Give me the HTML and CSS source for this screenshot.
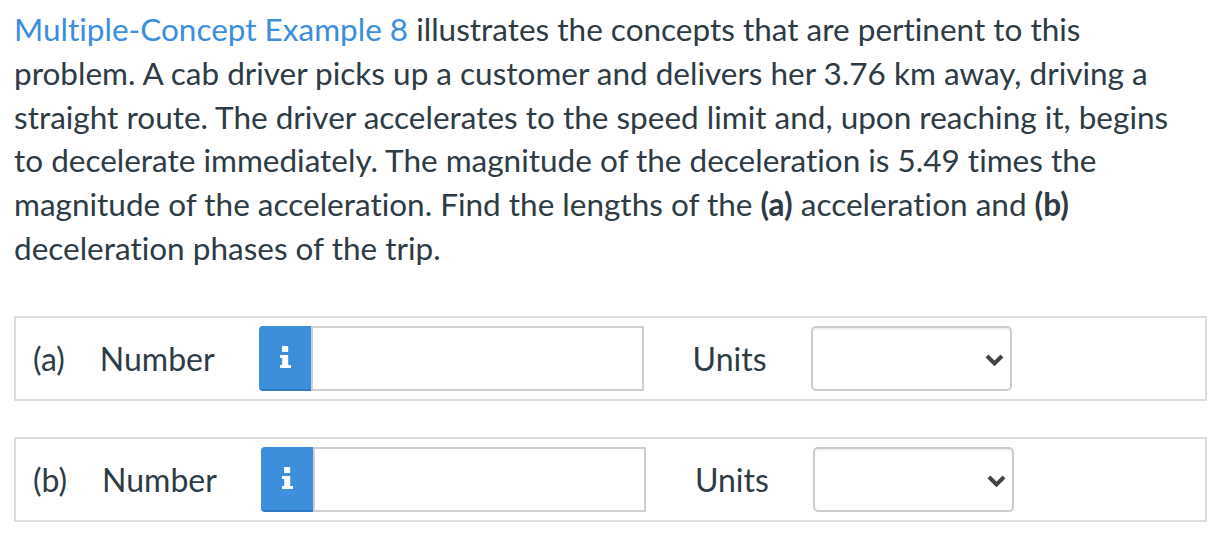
FILE: index.html
```html
<!DOCTYPE html>
<html lang="en">
<head>
<meta charset="utf-8">
<title>Question</title>
<link rel="stylesheet" href="styles.css">
</head>
<body>
<div class="question">
  <p class="prompt"><a class="link" href="#">Multiple-Concept Example 8</a> illustrates the concepts that are pertinent to this problem. A cab driver picks up a customer and delivers her 3.76 km away, driving a straight route. The driver accelerates to the speed limit and, upon reaching it, begins to decelerate immediately. The magnitude of the deceleration is 5.49 times the magnitude of the acceleration. Find the lengths of the <b>(a)</b> acceleration and <b>(b)</b> deceleration phases of the trip.</p>

  <div class="answer-row">
    <span class="part">(a)</span>
    <span class="label">Number</span>
    <div class="input-group">
      <button class="info-btn" type="button" aria-label="info">
        <svg width="12" height="23" viewBox="0 0 12 23"><rect x="2" y="0" width="6.2" height="6" rx="0.8" fill="#fff"/><path d="M0 9h8.2v10H11v3H0v-3h2.2v-7H0z" fill="#fff"/></svg>
      </button>
      <div class="num-input"></div>
    </div>
    <span class="units">Units</span>
    <div class="select">
      <svg class="chev" width="19" height="12" viewBox="0 0 19 12"><path d="M2 2l7.5 7.5L17 2" fill="none" stroke="#444" stroke-width="4"/></svg>
    </div>
  </div>

  <div class="answer-row">
    <span class="part">(b)</span>
    <span class="label">Number</span>
    <div class="input-group">
      <button class="info-btn" type="button" aria-label="info">
        <svg width="12" height="23" viewBox="0 0 12 23"><rect x="2" y="0" width="6.2" height="6" rx="0.8" fill="#fff"/><path d="M0 9h8.2v10H11v3H0v-3h2.2v-7H0z" fill="#fff"/></svg>
      </button>
      <div class="num-input"></div>
    </div>
    <span class="units">Units</span>
    <div class="select">
      <svg class="chev" width="19" height="12" viewBox="0 0 19 12"><path d="M2 2l7.5 7.5L17 2" fill="none" stroke="#444" stroke-width="4"/></svg>
    </div>
  </div>
</div>
</body>
</html>
```

FILE: styles.css
```css
html, body {
  margin: 0;
  padding: 0;
  background: #fff;
}
body {
  font-family: Lato, "Liberation Sans", sans-serif;
  color: #2d3b45;
  font-variant-ligatures: none;
}
.question {
  padding: 8px 5px 0 14px;
}
.prompt {
  margin: 0 0 45.5px;
  font-size: 31.5px;
  line-height: 43.75px;
  max-width: 1180px;
}
.link {
  color: #3b8ede;
  text-decoration: none;
}
.prompt b {
  font-weight: 700;
}
.answer-row {
  display: flex;
  align-items: center;
  border: 2px solid #dddddd;
  padding: 8px 16px;
  margin-bottom: 36px;
  font-size: 32px;
}
.part {
  margin-left: 1px;
  margin-right: 35px;
}
.label {
  margin-right: 44px;
}
.input-group {
  display: flex;
  height: 65px;
}
.info-btn {
  width: 52px;
  height: 65px;
  border: none;
  border-bottom: 2px solid #2f79c2;
  border-radius: 4px 0 0 4px;
  background: #3d8fdb;
  padding: 0;
  margin: 0;
  display: flex;
  align-items: center;
  justify-content: center;
}
.info-btn svg {
  display: block;
  margin-left: 2px;
}
.num-input {
  width: 329px;
  height: 61px;
  border: 2px solid #cfcfcf;
  background: #fff;
}
.units {
  margin-left: 49px;
  margin-right: 44px;
}
.select {
  width: 197px;
  height: 61px;
  border: 2px solid #cccccc;
  border-radius: 5px;
  box-shadow: inset 0 2px 2px rgba(0, 0, 0, 0.06);
  display: flex;
  align-items: center;
  justify-content: flex-end;
}
.chev {
  display: block;
  margin-right: 6px;
  margin-top: 2px;
}
```
